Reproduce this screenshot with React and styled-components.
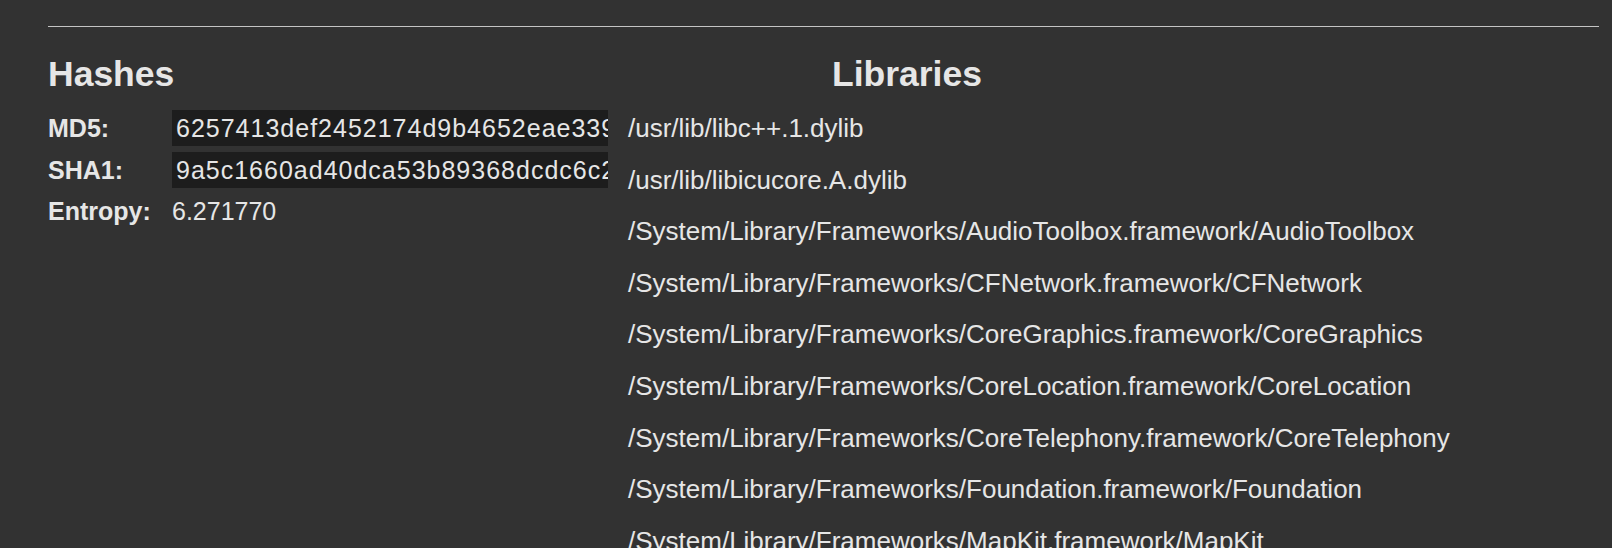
import styled, { createGlobalStyle } from 'styled-components'

const GlobalStyle = createGlobalStyle`
    html, body {
        margin: 0;
        padding: 0;
        background-color: #323232;
    }
    body {
        font-family: "Liberation Sans", Arial, sans-serif;
        color: #e6e6e6;
    }
`;

const Page = styled.div`
    padding: 26px 13px 0 48px;
`;

const Rule = styled.hr`
    border: none;
    height: 1px;
    margin: 0;
    background-color: #c4c4c4;
`;

const Columns = styled.div`
    display: grid;
    grid-template-columns: 560px 1fr;
    column-gap: 20px;
    margin-top: 27px;
`;

const Heading = styled.h2`
    margin: 0;
    font-size: 35.5px;
    line-height: 40px;
    font-weight: bold;
    color: #e6e6e6;
    width: ${props => props.$width || 'auto'};
    text-align: ${props => props.$align || 'left'};
`;

const HashTable = styled.div`
    display: grid;
    grid-template-columns: 124px 1fr;
    row-gap: 6px;
    margin-top: 16px;
`;

const Label = styled.div`
    font-size: 25px;
    font-weight: bold;
    line-height: ${props => props.$tall ? '36px' : '34px'};
    white-space: nowrap;
`;

const Value = styled.div`
    font-size: 25px;
    line-height: ${props => props.$boxed ? '36px' : '34px'};
    height: ${props => props.$boxed ? '36px' : 'auto'};
    padding-left: ${props => props.$boxed ? '4px' : '0'};
    letter-spacing: ${props => props.$boxed ? '1px' : '0'};
    background-color: ${props => props.$boxed ? '#1d1d1d' : 'transparent'};
    white-space: nowrap;
    overflow: hidden;
`;

const LibList = styled.ul`
    list-style: none;
    margin: 9px 0 0;
    padding: 0;

    li {
        font-size: 26px;
        line-height: 51.6px;
        white-space: nowrap;
    }
`;

const hashes = [
    { name: 'MD5:', value: '6257413def2452174d9b4652eae3391f', boxed: true },
    { name: 'SHA1:', value: '9a5c1660ad40dca53b89368dcdc6c2e8f41a07b3', boxed: true },
    { name: 'Entropy:', value: '6.271770', boxed: false },
];

const libraries = [
    '/usr/lib/libc++.1.dylib',
    '/usr/lib/libicucore.A.dylib',
    '/System/Library/Frameworks/AudioToolbox.framework/AudioToolbox',
    '/System/Library/Frameworks/CFNetwork.framework/CFNetwork',
    '/System/Library/Frameworks/CoreGraphics.framework/CoreGraphics',
    '/System/Library/Frameworks/CoreLocation.framework/CoreLocation',
    '/System/Library/Frameworks/CoreTelephony.framework/CoreTelephony',
    '/System/Library/Frameworks/Foundation.framework/Foundation',
    '/System/Library/Frameworks/MapKit.framework/MapKit',
    '/System/Library/Frameworks/QuartzCore.framework/QuartzCore',
    '/System/Library/Frameworks/Security.framework/Security',
    '/System/Library/Frameworks/UIKit.framework/UIKit',
];

const App = () => {
    return (
        <>
        <GlobalStyle />
        <Page>
            <Rule />
            <Columns>
                <section>
                    <Heading>Hashes</Heading>
                    <HashTable>
                        {hashes.map(hash => [
                            <Label key={`l-${hash.name}`} $tall={hash.boxed}>{hash.name}</Label>,
                            <Value key={`v-${hash.name}`} $boxed={hash.boxed}>{hash.value}</Value>
                        ])}
                    </HashTable>
                </section>
                <section>
                    <Heading $width="558px" $align="center">Libraries</Heading>
                    <LibList>
                        {libraries.map(lib => <li key={lib}>{lib}</li>)}
                    </LibList>
                </section>
            </Columns>
        </Page>
        </>
    )
}

export default App;
